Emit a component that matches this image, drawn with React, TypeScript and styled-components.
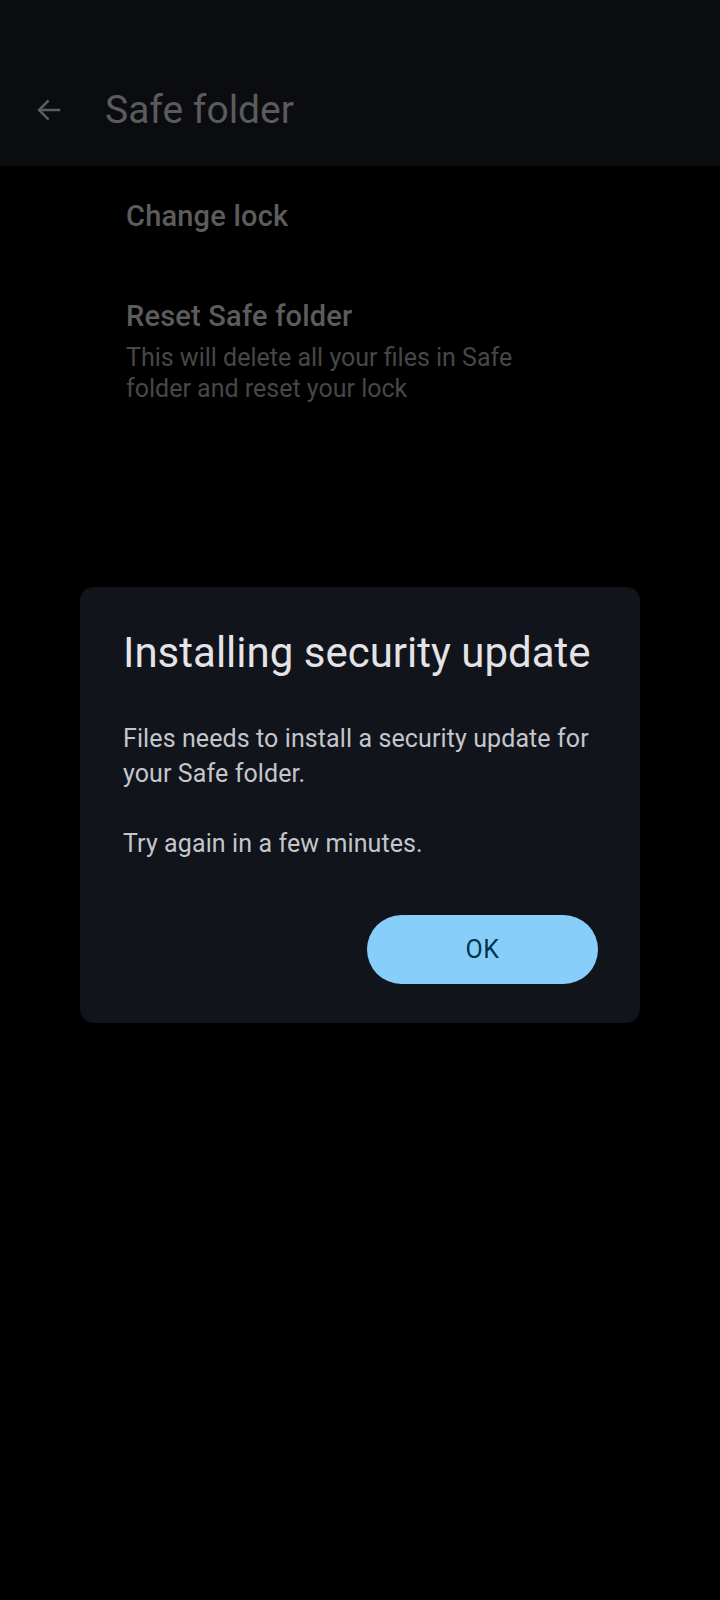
import styled, { createGlobalStyle } from "styled-components";

const GlobalStyle = createGlobalStyle`
  html, body {
    margin: 0;
    padding: 0;
    background: #000;
  }
  body {
    font-family: Roboto, "Noto Sans", "Liberation Sans", sans-serif;
  }
  * {
    box-sizing: border-box;
  }
`;

const Screen = styled.div`
  min-height: 1600px;
  background: #000;
`;

const TopBar = styled.header`
  display: flex;
  align-items: center;
  gap: 41px;
  height: 166px;
  padding: 86px 0 32px 34px;
  background: #0b0c0f;
`;

const BackButton = styled.button`
  display: flex;
  align-items: center;
  justify-content: center;
  width: 30px;
  height: 48px;
  padding: 0;
  border: none;
  background: none;
  color: #5a5c60;
`;

const Title = styled.h1`
  margin: 0;
  font-size: 39px;
  line-height: 48px;
  font-weight: 400;
  color: #5b5b5d;
`;

const Item = styled.div`
  padding: 32px 40px 32px 126px;
`;

const ItemTitle = styled.div`
  font-size: 29px;
  line-height: 36px;
  font-weight: 500;
  letter-spacing: 0.2px;
  color: #5c5c5c;
`;

const ItemText = styled.div`
  margin-top: 8px;
  max-width: 410px;
  font-size: 25px;
  line-height: 31px;
  color: #474747;
`;

const Scrim = styled.div`
  position: fixed;
  inset: 0;
  display: flex;
  align-items: center;
  justify-content: center;
  padding-top: 10px;
`;

const Dialog = styled.div`
  width: 560px;
  padding: 40px 42px 39px 43px;
  border-radius: 14px;
  background: #11141a;
`;

const DialogTitle = styled.h2`
  margin: 0 0 42px;
  font-size: 42px;
  line-height: 52px;
  font-weight: 400;
  color: #e3e3e8;
`;

const DialogText = styled.p<{ $gap?: boolean }>`
  margin: ${(p) => (p.$gap ? "35px" : "0")} 0 0;
  font-size: 25px;
  line-height: 35px;
  letter-spacing: 0.1px;
  color: #c4c6ce;
`;

const Actions = styled.div`
  display: flex;
  justify-content: flex-end;
  margin-top: 54px;
`;

const OkButton = styled.button`
  width: 231px;
  height: 69px;
  border: none;
  border-radius: 35px;
  background: #87cefa;
  color: #00354a;
  font-family: inherit;
  font-size: 25px;
  font-weight: 400;
  letter-spacing: 0.5px;
`;

const BackArrow = () => (
  <svg width="30" height="30" viewBox="0 0 24 24" fill="none">
    <path
      d="M20 12H4.5M11 5l-7 7 7 7"
      stroke="currentColor"
      strokeWidth="2"
      strokeLinecap="square"
    />
  </svg>
);

export default function App() {
  return (
    <Screen>
      <GlobalStyle />
      <TopBar>
        <BackButton aria-label="Back">
          <BackArrow />
        </BackButton>
        <Title>Safe folder</Title>
      </TopBar>
      <Item>
        <ItemTitle>Change lock</ItemTitle>
      </Item>
      <Item>
        <ItemTitle>Reset Safe folder</ItemTitle>
        <ItemText>
          This will delete all your files in Safe folder and reset your lock
        </ItemText>
      </Item>
      <Scrim>
        <Dialog role="dialog">
          <DialogTitle>Installing security update</DialogTitle>
          <DialogText>
            Files needs to install a security update for your Safe folder.
          </DialogText>
          <DialogText $gap>Try again in a few minutes.</DialogText>
          <Actions>
            <OkButton>OK</OkButton>
          </Actions>
        </Dialog>
      </Scrim>
    </Screen>
  );
}
